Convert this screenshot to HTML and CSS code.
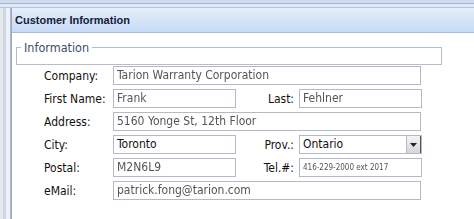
FILE: index.html
```html
<!DOCTYPE html>
<html lang="en">
<head>
    <meta charset="UTF-8">
    <title>Customer Information</title>
    <link rel="stylesheet" href="styles.css">
</head>
<body>
    <div class="topbar"></div>

    <div class="layout">
        <div class="side"></div>

        <div class="panel">
            <div class="panel-header">Customer Information</div>

            <div class="panel-body">
                <fieldset class="info-set">
                    <legend>Information</legend>
                </fieldset>

                <div class="form">
                    <div class="row">
                        <label class="lbl">Company:</label>
                        <div class="field wide masked">Tarion Warranty Corporation</div>
                    </div>
                    <div class="row">
                        <label class="lbl">First Name:</label>
                        <div class="field half masked">Frank</div>
                        <label class="lbl2">Last:</label>
                        <div class="field half masked">Fehlner</div>
                    </div>
                    <div class="row">
                        <label class="lbl">Address:</label>
                        <div class="field wide masked">5160 Yonge St, 12th Floor</div>
                    </div>
                    <div class="row">
                        <label class="lbl">City:</label>
                        <div class="field half">Toronto</div>
                        <label class="lbl2">Prov.:</label>
                        <div class="field half combo">
                            <span>Ontario</span>
                            <span class="trigger">
                                <svg width="7" height="4" viewBox="0 0 7 4"><path d="M0 0h7L3.5 4z" fill="#222"/></svg>
                            </span>
                        </div>
                    </div>
                    <div class="row">
                        <label class="lbl">Postal:</label>
                        <div class="field half masked">M2N6L9</div>
                        <label class="lbl2">Tel.#:</label>
                        <div class="field half masked small">416-229-2000 ext 2017</div>
                    </div>
                    <div class="row">
                        <label class="lbl">eMail:</label>
                        <div class="field wide masked">patrick.fong@tarion.com</div>
                    </div>
                </div>
            </div>
        </div>
    </div>
</body>
</html>
```

FILE: styles.css
```css
body {
    margin: 0;
    padding: 0;
    background-color: #fff;
    font-family: 'DejaVu Sans Condensed', 'DejaVu Sans', sans-serif;
    color: #111;
    overflow: hidden;
}

.topbar {
    height: 8px;
    background: linear-gradient(#cfdcef 0, #cfdcef 3px, #a3b6d2 3px, #a3b6d2 4px, #dfe8f6 4px, #dfe8f6 7px, #b3c4dd 7px);
}

.layout {
    display: flex;
    height: 211px;
}

.side {
    width: 11px;
    background: linear-gradient(90deg, #e4e9f0 0, #e4e9f0 3px, #cdd6e3 3px, #cdd6e3 6px, #eef2f7 6px, #eef2f7 10px, #a9b9d0 10px);
}

.panel {
    flex: 1;
    border-left: 1px solid #99a9c2;
    background-color: #fff;
}

.panel-header {
    height: 24px;
    line-height: 24px;
    padding-left: 3px;
    font-family: 'Liberation Sans', Arial, sans-serif;
    font-size: 11px;
    font-weight: bold;
    color: #15203a;
    background: linear-gradient(#e6eefa, #c6daf6);
    border-bottom: 1px solid #a9bcd6;
}

.panel-body {
    padding-left: 4px;
}

.info-set {
    box-sizing: border-box;
    margin: 7px 32px 0 0;
    padding: 0;
    height: 25px;
    border: 1px solid #b5bdcc;
}

.info-set legend {
    margin-left: 4px;
    padding: 0 3px;
    font-size: 12.5px;
    line-height: 15px;
    color: #3b4d6a;
}

.form {
    padding: 1px 0 0 28px;
}

.row {
    display: flex;
    align-items: center;
    height: 19px;
    margin-bottom: 4px;
    font-size: 12px;
}

.lbl {
    width: 69px;
}

.lbl2 {
    width: 58px;
    padding-right: 5px;
    text-align: right;
}

.field {
    box-sizing: border-box;
    height: 19px;
    line-height: 17px;
    padding-left: 3px;
    border: 1px solid #b5b8c8;
    background-color: #fff;
    font-size: 12px;
    white-space: nowrap;
    overflow: hidden;
}

.wide {
    width: 308px;
}

.half {
    width: 123px;
}

.masked {
    color: #555;
    filter: blur(0.6px);
}

.small {
    font-size: 8px;
}

.combo {
    display: flex;
    justify-content: space-between;
    padding-right: 0;
}

.trigger {
    width: 13px;
    display: flex;
    align-items: center;
    justify-content: center;
    background: linear-gradient(#f4f4f4, #d6d6d6);
    border-left: 1px solid #b5b8c8;
    border-right: 1px solid #555;
}
```
